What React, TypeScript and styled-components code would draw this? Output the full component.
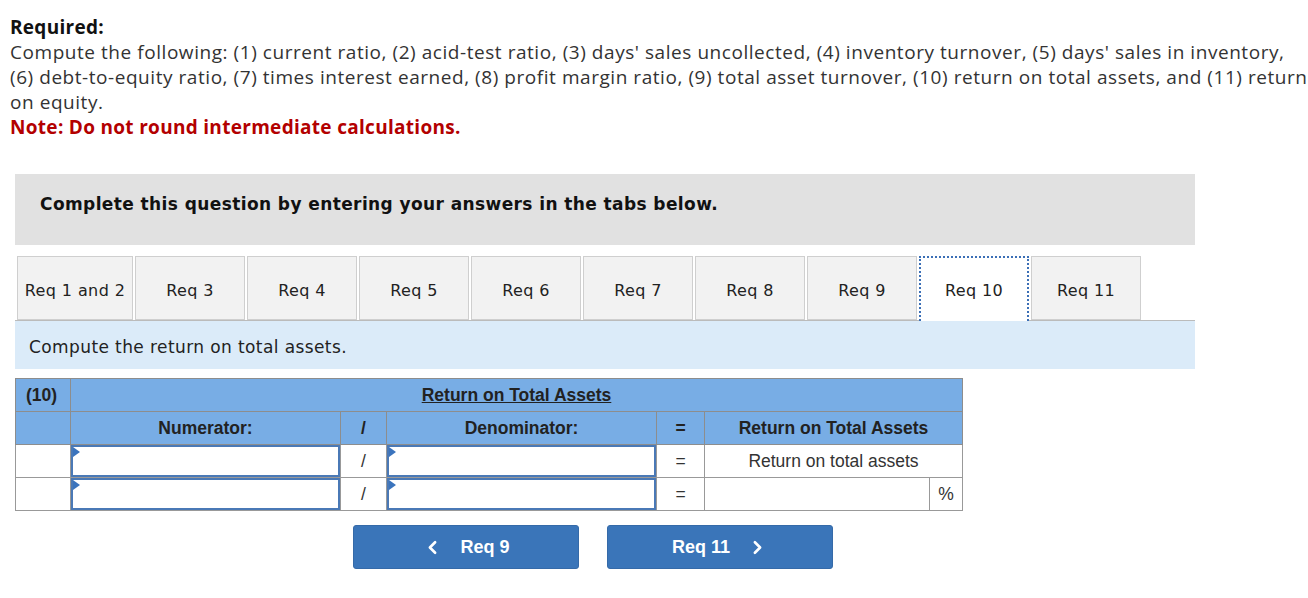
import React from 'react'
import styled, { createGlobalStyle } from 'styled-components'
import { FiChevronLeft, FiChevronRight } from 'react-icons/fi'

const GlobalStyle = createGlobalStyle`
  html, body { margin: 0; padding: 0; background: #fff; }
  body { font-family: "Liberation Sans", Arial, sans-serif; }
`

const tabs = ['Req 1 and 2', 'Req 3', 'Req 4', 'Req 5', 'Req 6', 'Req 7', 'Req 8', 'Req 9', 'Req 10', 'Req 11']

const App = () => {
  return (
    <Page>
      <GlobalStyle />
      <Intro>
        <Strong>Required:</Strong>
        Compute the following: (1) current ratio, (2) acid-test ratio, (3) days' sales uncollected, (4) inventory turnover, (5) days' sales in inventory,
        <br />
        (6) debt-to-equity ratio, (7) times interest earned, (8) profit margin ratio, (9) total asset turnover, (10) return on total assets, and (11) return
        <br />
        on equity.
        <Note>Note: Do not round intermediate calculations.</Note>
      </Intro>

      <Panel>
        <Banner>Complete this question by entering your answers in the tabs below.</Banner>
        <TabRow>
          {tabs.map((t) => (
            <Tab key={t} active={t === 'Req 10'}>{t}</Tab>
          ))}
        </TabRow>
        <Prompt>Compute the return on total assets.</Prompt>
      </Panel>

      <Grid>
        <tbody>
          <tr>
            <Head align="left">(10)</Head>
            <Head colSpan={6}><Underline>Return on Total Assets</Underline></Head>
          </tr>
          <tr>
            <Head />
            <Head>Numerator:</Head>
            <Head>/</Head>
            <Head>Denominator:</Head>
            <Head>=</Head>
            <Head colSpan={2}>Return on Total Assets</Head>
          </tr>
          <tr>
            <Cell />
            <InputCell><Field /></InputCell>
            <Cell w="45px">/</Cell>
            <InputCell><Field /></InputCell>
            <Cell w="47px">=</Cell>
            <Cell colSpan={2}>Return on total assets</Cell>
          </tr>
          <tr>
            <Cell />
            <InputCell><Field /></InputCell>
            <Cell>/</Cell>
            <InputCell><Field /></InputCell>
            <Cell>=</Cell>
            <Cell />
            <Cell w="32px">%</Cell>
          </tr>
        </tbody>
      </Grid>

      <Nav>
        <NavButton><FiChevronLeft size={21} strokeWidth={3} /><span>Req 9</span></NavButton>
        <NavButton><span>Req 11</span><FiChevronRight size={21} strokeWidth={3} /></NavButton>
      </Nav>
    </Page>
  )
}

const Page = styled.div`
  padding: 15px 0 0 0;
  width: 1308px;
  height: 598px;
  box-sizing: border-box;
  overflow: hidden;
`
const Intro = styled.div`
  padding-left: 10px;
  font-family: "Open Sans", "Liberation Sans", Arial, sans-serif;
  font-size: 19px;
  letter-spacing: 0.55px;
  line-height: 25px;
  color: #333;
  white-space: nowrap;
`
const Strong = styled.div`
  font-weight: 700;
  letter-spacing: 0.3px;
  color: #111;
`
const Note = styled.div`
  font-weight: 700;
  letter-spacing: 0.3px;
  color: #b30000;
`
const Panel = styled.div`
  margin: 34px 0 0 15px;
  width: 1180px;
`
const Banner = styled.div`
  height: 71px;
  background: #e1e1e1;
  display: flex;
  align-items: center;
  padding-left: 25px;
  font-family: "DejaVu Sans", Verdana, sans-serif;
  font-weight: 700;
  font-size: 17px;
  letter-spacing: 0.4px;
  color: #111;
  padding-bottom: 12px;
  box-sizing: border-box;
`
const TabRow = styled.div`
  display: flex;
  align-items: flex-end;
  gap: 2px;
  margin-top: 11px;
  padding-left: 2px;
  border-bottom: 1px solid #bbb;
  height: 65px;
  box-sizing: border-box;
`
const Tab = styled.div<{ active?: boolean }>`
  width: 110px;
  height: ${({ active }) => (active ? '65px' : '64px')};
  margin-bottom: ${({ active }) => (active ? '-1px' : '0')};
  padding-top: ${({ active }) => (active ? '2px' : '4px')};
  box-sizing: border-box;
  display: flex;
  align-items: center;
  justify-content: center;
  font-family: "DejaVu Sans", Verdana, sans-serif;
  font-size: 16px;
  letter-spacing: 0.4px;
  color: #222;
  background: ${({ active }) => (active ? '#fff' : '#f2f2f2')};
  border: ${({ active }) => (active ? '2px dotted #3b6fb6' : '1px solid #cfcfcf')};
  border-bottom: ${({ active }) => (active ? 'none' : '1px solid #cfcfcf')};
  &:first-child { width: 116px; }
`
const Prompt = styled.div`
  height: 48px;
  background: #dbebf9;
  display: flex;
  align-items: center;
  padding-left: 14px;
  padding-top: 4px;
  box-sizing: border-box;
  font-family: "DejaVu Sans", Verdana, sans-serif;
  font-size: 17px;
  letter-spacing: 0.4px;
  color: #222;
`
const Grid = styled.table`
  margin: 9px 0 0 15px;
  border-collapse: collapse;
  width: 948px;
  font-family: "Liberation Sans", Arial, sans-serif;
  font-size: 17.5px;
  color: #222;
`
const Head = styled.td<{ align?: string }>`
  background: #78ade5;
  border: 1px solid #8d8d8d;
  height: 32px;
  padding: 0 10px;
  font-weight: 700;
  text-align: ${({ align }) => align || 'center'};
  &:first-child { width: 34px; }
`
const Underline = styled.span`
  text-decoration: underline;
`
const Cell = styled.td<{ w?: string }>`
  border: 1px solid #999;
  height: 32px;
  padding: 0;
  text-align: center;
  width: ${({ w }) => w || 'auto'};
  color: #333;
`
const InputCell = styled.td`
  border: 1px solid #999;
  padding: 0;
  height: 32px;
  width: 269px;
`
const Field = styled.div`
  position: relative;
  height: 32px;
  border: 2px solid #4a79b6;
  box-sizing: border-box;
  background: #fff;
  &::before {
    content: '';
    position: absolute;
    top: 0;
    left: 0;
    border-top: 5px solid transparent;
    border-bottom: 5px solid transparent;
    border-left: 7px solid #3b74bd;
  }
`
const Nav = styled.div`
  display: flex;
  gap: 28px;
  margin: 14px 0 0 353px;
`
const NavButton = styled.button`
  width: 226px;
  height: 44px;
  background: #3a75b9;
  border: 1px solid #356aa8;
  border-radius: 3px;
  color: #fff;
  font-family: "Liberation Sans", Arial, sans-serif;
  font-weight: 700;
  font-size: 18px;
  display: flex;
  align-items: center;
  justify-content: center;
  gap: 17px;
`

export default App
